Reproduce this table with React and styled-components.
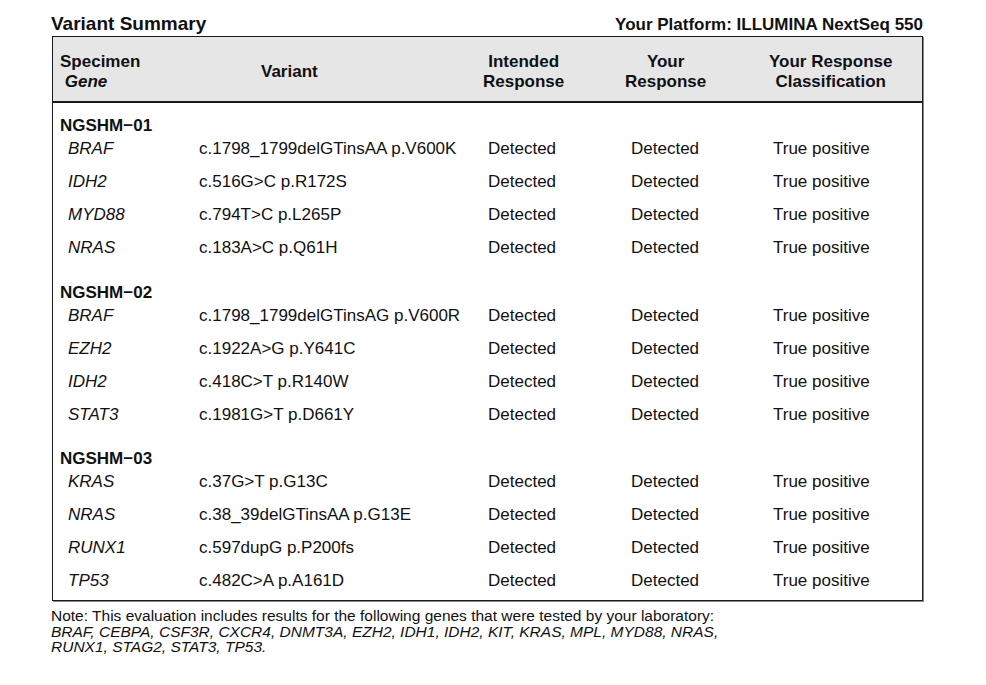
import React from 'react';
import styled, { createGlobalStyle } from 'styled-components';

const Global = createGlobalStyle`
  body {
    margin: 0;
    background: #fff;
    font-family: 'Liberation Sans', Arial, sans-serif;
    color: #111;
  }
`;

const Page = styled.div`
  width: 986px;
  height: 685px;
  padding: 10px 0 0 52px;
  box-sizing: border-box;
`;

const TitleBar = styled.div`
  width: 871px;
  height: 26px;
  display: flex;
  justify-content: space-between;
  align-items: flex-end;
  font-weight: bold;
`;

const Title = styled.div`
  font-size: 19px;
  line-height: 24px;
  margin-left: -1px;
`;

const Platform = styled.div`
  font-size: 17px;
  line-height: 22px;
`;

const Box = styled.div`
  width: 871px;
  box-sizing: border-box;
  border: 1.5px solid #1a1a1a;
  box-shadow: 1px 1px 0 #8a8a8a;
  padding-bottom: 9px;
`;

const cols = '138px 289px 143px 142px 1fr';

const Head = styled.div`
  display: grid;
  grid-template-columns: ${cols};
  align-items: center;
  height: 59px;
  padding-top: 5px;
  background: #e6e6e6;
  border-bottom: 2px solid #1a1a1a;
  font-weight: bold;
  font-size: 17px;
  line-height: 19.5px;
  margin-bottom: 13px;
`;

const HeadCell = styled.div`
  padding-left: ${p => p.$pad}px;
`;

const HeadLabel = styled.div`
  display: inline-block;
  text-align: ${p => (p.$left ? 'left' : 'center')};
`;

const Group = styled.div`
  & + & {
    margin-top: 24.5px;
  }
`;

const Specimen = styled.div`
  font-weight: bold;
  font-size: 17px;
  line-height: 20px;
  padding-left: 7px;
  margin-bottom: 3px;
`;

const Row = styled.div`
  display: grid;
  grid-template-columns: ${cols};
  font-size: 17px;
  line-height: 20px;
  & + & {
    margin-top: 13px;
  }
`;

const Cell = styled.div`
  padding-left: 8px;
  white-space: nowrap;
  font-style: ${p => (p.$italic ? 'italic' : 'normal')};
  ${p => p.$indent && 'padding-left: 15px;'}
`;

const Note = styled.div`
  margin-top: 7px;
  margin-left: -1px;
  font-size: 15.5px;
  line-height: 15.5px;
`;

const groups = [
  {
    id: 'NGSHM\u221201',
    rows: [
      ['BRAF', 'c.1798_1799delGTinsAA p.V600K'],
      ['IDH2', 'c.516G>C p.R172S'],
      ['MYD88', 'c.794T>C p.L265P'],
      ['NRAS', 'c.183A>C p.Q61H'],
    ],
  },
  {
    id: 'NGSHM\u221202',
    rows: [
      ['BRAF', 'c.1798_1799delGTinsAG p.V600R'],
      ['EZH2', 'c.1922A>G p.Y641C'],
      ['IDH2', 'c.418C>T p.R140W'],
      ['STAT3', 'c.1981G>T p.D661Y'],
    ],
  },
  {
    id: 'NGSHM\u221203',
    rows: [
      ['KRAS', 'c.37G>T p.G13C'],
      ['NRAS', 'c.38_39delGTinsAA p.G13E'],
      ['RUNX1', 'c.597dupG p.P200fs'],
      ['TP53', 'c.482C>A p.A161D'],
    ],
  },
];

export default function App() {
  return (
    <Page>
      <Global />
      <TitleBar>
        <Title>Variant Summary</Title>
        <Platform>Your Platform: ILLUMINA NextSeq 550</Platform>
      </TitleBar>
      <Box>
        <Head>
          <HeadCell $pad={7}>
            <HeadLabel $left>
              Specimen
              <br />
              <i>&nbsp;Gene</i>
            </HeadLabel>
          </HeadCell>
          <HeadCell $pad={70}>
            <HeadLabel>Variant</HeadLabel>
          </HeadCell>
          <HeadCell $pad={3}>
            <HeadLabel>
              Intended
              <br />
              Response
            </HeadLabel>
          </HeadCell>
          <HeadCell $pad={2}>
            <HeadLabel>
              Your
              <br />
              Response
            </HeadLabel>
          </HeadCell>
          <HeadCell $pad={4}>
            <HeadLabel>
              Your Response
              <br />
              Classification
            </HeadLabel>
          </HeadCell>
        </Head>
        {groups.map(g => (
          <Group key={g.id}>
            <Specimen>{g.id}</Specimen>
            {g.rows.map(([gene, variant]) => (
              <Row key={gene + variant}>
                <Cell $italic $indent>
                  {gene}
                </Cell>
                <Cell>{variant}</Cell>
                <Cell>Detected</Cell>
                <Cell>Detected</Cell>
                <Cell>True positive</Cell>
              </Row>
            ))}
          </Group>
        ))}
      </Box>
      <Note>
        Note: This evaluation includes results for the following genes that were tested by your laboratory:
        <br />
        <i>
          BRAF, CEBPA, CSF3R, CXCR4, DNMT3A, EZH2, IDH1, IDH2, KIT, KRAS, MPL, MYD88, NRAS,
          <br />
          RUNX1, STAG2, STAT3, TP53.
        </i>
      </Note>
    </Page>
  );
}
